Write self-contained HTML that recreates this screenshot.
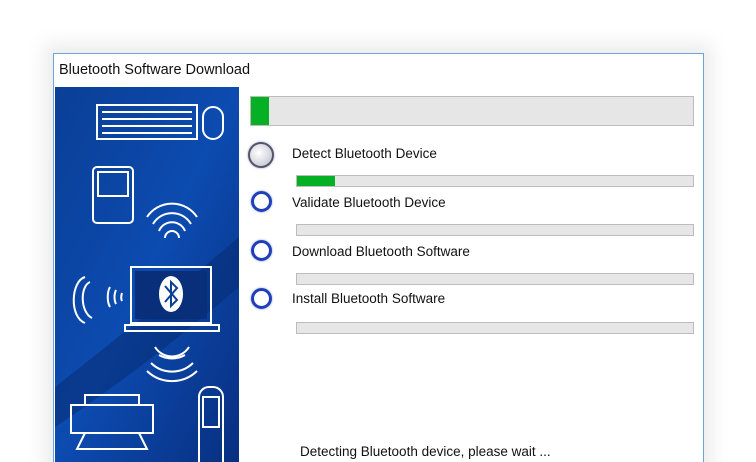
<!DOCTYPE html>
<html style="overflow:hidden"><head><style>
*{margin:0;padding:0;box-sizing:border-box}
html,body{width:756px;height:462px;overflow:hidden}
body{background:#fff;font-family:"Liberation Sans",sans-serif;position:relative}
.shadow{position:absolute;left:44px;top:44px;width:668px;height:430px;background:#ececec;filter:blur(9px)}
.win{position:absolute;left:53px;top:53px;width:651px;height:409px;background:#fff;border:1px solid #6aa6dc;border-bottom:none}
.title{position:absolute;left:5px;top:8px;font-size:14.5px;color:#111}
.panel{position:absolute;left:1px;top:33px;width:184px;height:376px}
.big{position:absolute;left:196px;top:42px;width:444px;height:30px;background:#e6e6e6;border:1px solid #bcbcbc}
.big i{position:absolute;left:0;top:0;width:18px;height:100%;background:#06b025}
.bar{position:absolute;left:242px;width:398px;height:12px;background:#e6e6e6;border:1px solid #bcbcbc}
.bar i{position:absolute;left:0;top:0;width:38px;height:100%;background:#06b025}
.c{position:absolute;left:197px;width:21px;height:21px;border-radius:50%;border:3px solid #1f3fb8;box-shadow:0 0 2px #8899dd}
.t{position:absolute;left:238px;font-size:13.5px;color:#111}
</style></head><body>
<div class="shadow"></div>
<div class="win">
<div class="title">Bluetooth Software Download</div>
<svg class="panel" viewBox="0 0 184 376" preserveAspectRatio="none">
<defs><linearGradient id="g" x1="0" y1="0" x2="1" y2="1"><stop offset="0" stop-color="#0a3f96"/><stop offset=".5" stop-color="#0c4bb0"/><stop offset="1" stop-color="#082f80"/></linearGradient></defs>
<rect width="184" height="376" fill="url(#g)"/>
<path d="M0 300 Q90 230 184 150 L184 200 Q90 280 0 340Z" fill="#06296e" opacity=".5"/>
<g fill="none" stroke="#fff" stroke-width="2">
<rect x="42" y="18" width="100" height="34"/>
<rect x="148" y="20" width="20" height="32" rx="10"/>
<line x1="47" y1="25" x2="137" y2="25"/><line x1="47" y1="32" x2="137" y2="32"/><line x1="47" y1="39" x2="137" y2="39"/><line x1="47" y1="46" x2="137" y2="46"/>
<rect x="38" y="80" width="40" height="56" rx="4"/><rect x="43" y="85" width="30" height="24"/>
<path d="M92 130a30 30 0 0 1 50 0M98 137a22 22 0 0 1 38 0M104 144a14 14 0 0 1 26 0M110 151a7 7 0 0 1 14 0"/>
<rect x="76" y="180" width="80" height="56"/><rect x="70" y="238" width="94" height="6"/>
<path d="M30 190c-14 4-16 40 0 46M35 195c-10 4-10 30 2 36M55 200c-3 5-3 15 0 20M61 203c-2 4-2 10 0 14M67 206c-1 3-1 6 0 8"/>
<path d="M100 260a20 20 0 0 0 34 0M104 268a26 26 0 0 0 26 0M96 276a30 30 0 0 0 42 0M92 284a36 36 0 0 0 50 0"/>
<rect x="16" y="318" width="82" height="28"/><rect x="30" y="308" width="54" height="10"/><path d="M30 346l-8 16h70l-8-16"/>
<rect x="144" y="300" width="24" height="90" rx="10"/><rect x="148" y="310" width="16" height="30"/>
</g>
<rect x="80" y="184" width="72" height="48" fill="#0a2f7a"/>
<ellipse cx="116" cy="207" rx="12" ry="18" fill="#fff"/>
<path d="M110 199l12 14-6 6v-24l6 6-12 14" fill="none" stroke="#0a3f96" stroke-width="2"/>
</svg>
<div class="big"><i></i></div>
<div class="c" style="top:88px;width:26px;height:26px;left:194px;border:2px solid #556;background:radial-gradient(circle at 40% 40%,#fff,#bbc)"></div>
<div class="t" style="top:92px">Detect Bluetooth Device</div>
<div class="bar" style="top:121px"><i></i></div>
<div class="c" style="top:137px"></div>
<div class="t" style="top:141px">Validate Bluetooth Device</div>
<div class="bar" style="top:170px"></div>
<div class="c" style="top:186px"></div>
<div class="t" style="top:190px">Download Bluetooth Software</div>
<div class="bar" style="top:219px"></div>
<div class="c" style="top:234px"></div>
<div class="t" style="top:237px">Install Bluetooth Software</div>
<div class="bar" style="top:268px"></div>
<div class="t" style="top:390px;left:246px">Detecting Bluetooth device, please wait ...</div>
</div>
</body></html>
